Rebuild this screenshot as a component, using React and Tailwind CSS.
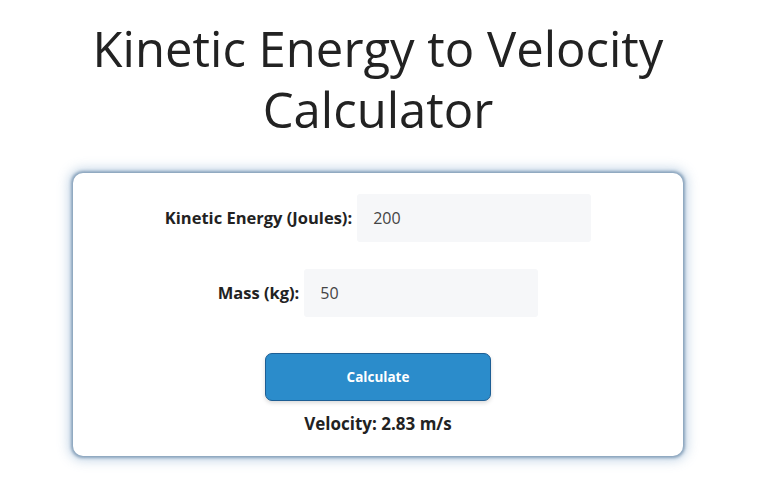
export default function App() {
  return (
    <div className="min-h-[502px] w-full bg-white pr-[12px]" style={{ fontFamily: '"Open Sans", "Noto Sans", sans-serif' }}>
      <h1 className="mx-auto pt-[18px] text-center text-[49px] font-normal leading-[61px] text-[#222]">
        Kinetic Energy to Velocity
        <br />
        Calculator
      </h1>
      <div className="mx-auto mt-[33px] w-[610px] rounded-[10px] bg-white pt-[21px] pb-[20px] shadow-[0_0_3px_2px_rgba(110,140,170,0.75),0_0_12px_4px_rgba(120,160,200,0.45)]">
        <div className="flex items-center justify-center gap-[5px]">
          <label className="text-[16.5px] font-bold text-[#222]">Kinetic Energy (Joules):</label>
          <input
            defaultValue="200"
            className="h-[48px] w-[234px] rounded-[3px] bg-[#f6f7f9] px-[16px] text-[16px] text-[#444] outline-none"
          />
        </div>
        <div className="mt-[27px] flex items-center justify-center gap-[5px]">
          <label className="text-[16.5px] font-bold text-[#222]">Mass (kg):</label>
          <input
            defaultValue="50"
            className="h-[48px] w-[234px] rounded-[3px] bg-[#f6f7f9] px-[16px] text-[16px] text-[#444] outline-none"
          />
        </div>
        <div className="mt-[36px] flex justify-center">
          <button className="h-[48px] w-[226px] rounded-[7px] border-[1.5px] border-[#1d5e94] bg-[#2b8ccb] text-[13.5px] font-bold text-white shadow-[0_2px_4px_rgba(0,0,0,0.15)]">
            Calculate
          </button>
        </div>
        <p className="mt-[11px] text-center text-[17px] font-bold leading-[24px] text-[#222]">Velocity: 2.83 m/s</p>
      </div>
    </div>
  );
}
